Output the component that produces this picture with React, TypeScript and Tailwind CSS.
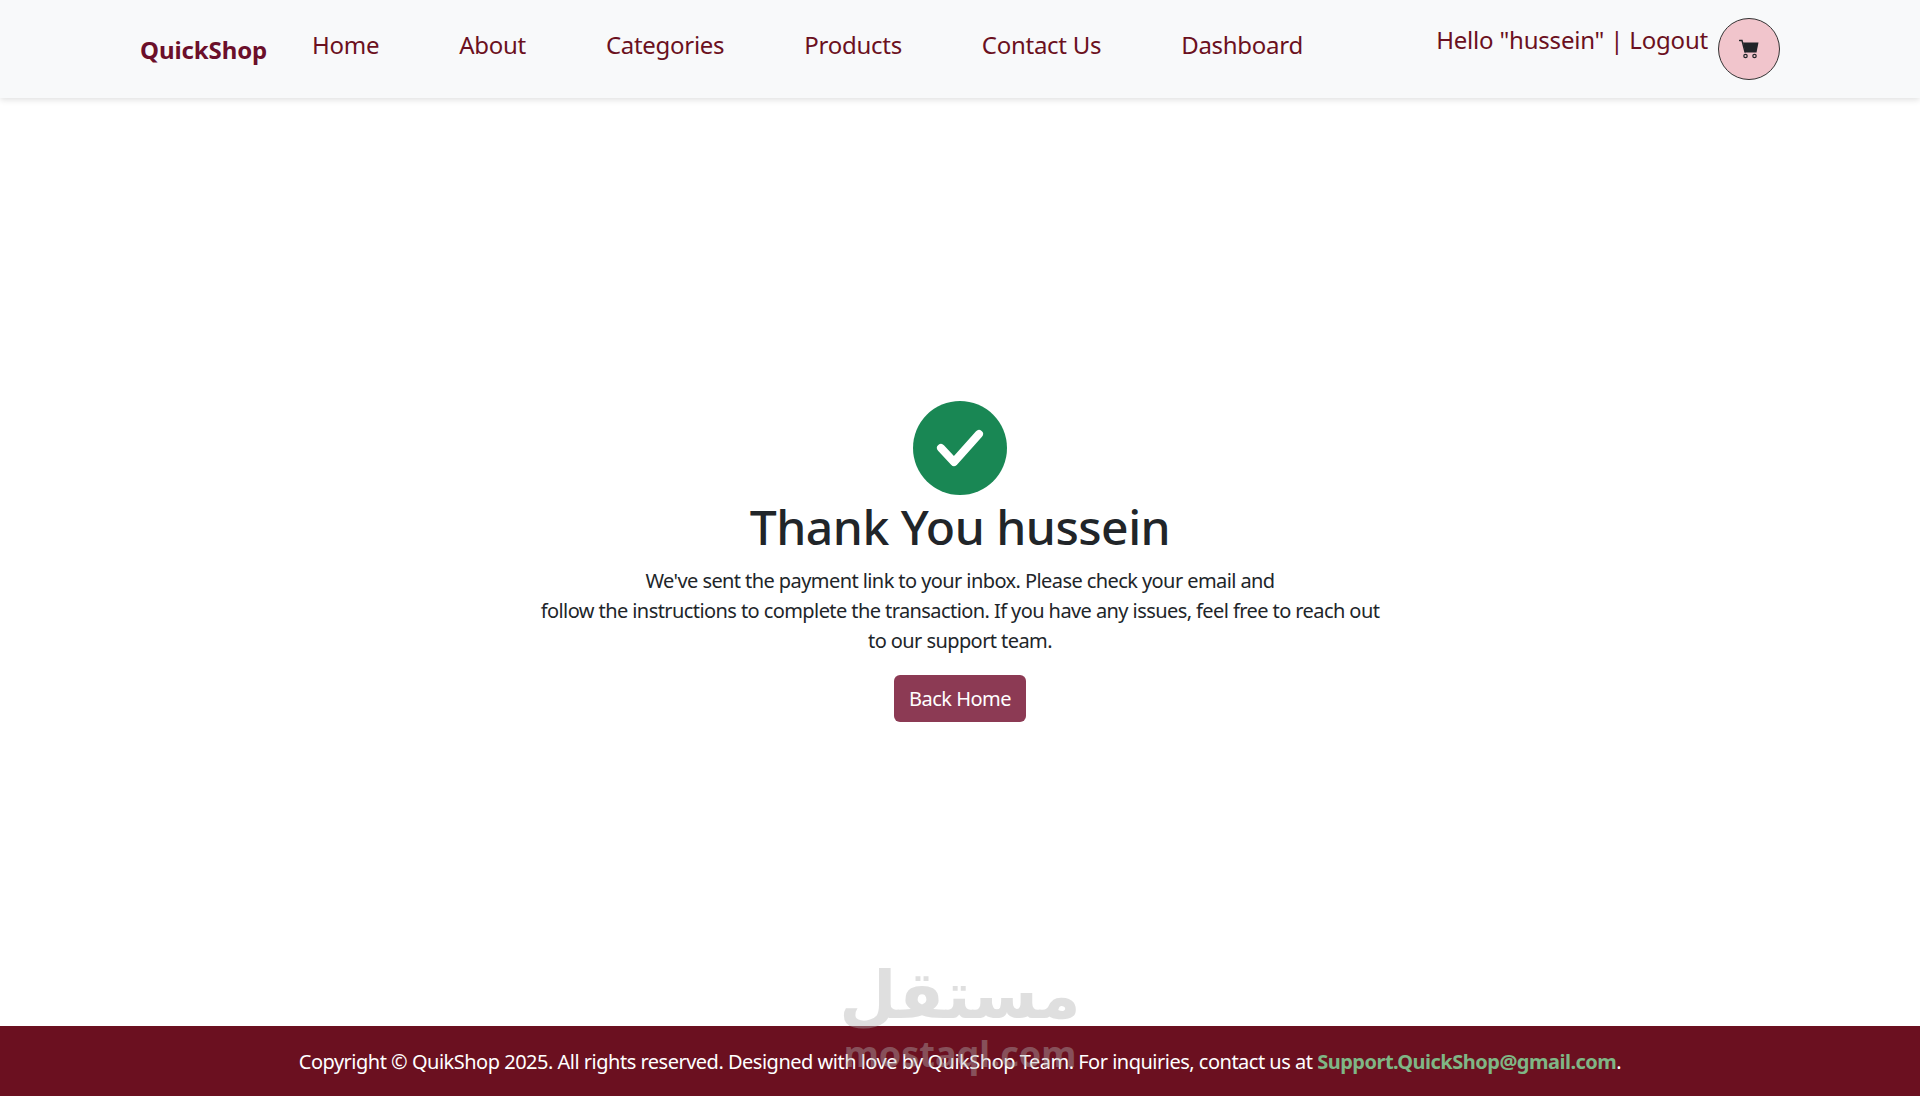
const links = ['Home', 'About', 'Categories', 'Products', 'Contact Us', 'Dashboard'];

function CartIcon() {
  return (
    <svg width="20" height="20" viewBox="0 0 20 20" fill="none">
      <path d="M0.5 1.5H3L6 13" stroke="#212529" strokeWidth="1.4" strokeLinecap="round" />
      <path d="M4 3.5H19.5L17.5 13.5H6.2Z" fill="#212529" />
      <circle cx="6.5" cy="17" r="1.7" stroke="#212529" strokeWidth="1.2" />
      <circle cx="15.5" cy="17" r="1.7" stroke="#212529" strokeWidth="1.2" />
    </svg>
  );
}

export default function App() {
  return (
    <div className="relative flex min-h-[1096px] flex-col bg-white font-['Noto_Sans',sans-serif]">
      {/* Navbar */}
      <nav className="flex h-[98px] items-center bg-[#f8f9fa] pl-[140px] pr-[140px] shadow-[0_2px_6px_rgba(0,0,0,0.12)]">
        <a className="mt-[2px] w-[172px] text-[24px] font-bold tracking-[-0.1px] text-[#6b0f2a]">QuickShop</a>
        <ul className="flex -translate-y-[4px] gap-[80px] text-[24px] tracking-[-0.28px] text-[#6b1020]">
          {links.map((link) => (
            <li key={link}>{link}</li>
          ))}
        </ul>
        <div className="ml-auto flex items-center gap-[10px]">
          <span className="-translate-y-[9px] text-[24px] tracking-[-0.2px] text-[#6b1020]">Hello "hussein" | Logout</span>
          <button className="flex h-[62px] w-[62px] items-center justify-center rounded-full border border-[#333] bg-[#f1c5cc]">
            <CartIcon />
          </button>
        </div>
      </nav>

      {/* Thank you */}
      <main className="flex flex-1 flex-col items-center pt-[303px]">
        <div className="flex h-[94px] w-[94px] items-center justify-center rounded-full bg-[#198754]">
          <svg width="94" height="94" viewBox="0 0 94 94" fill="none">
            <path d="M28 47L41 61L66 33" stroke="white" strokeWidth="8" strokeLinecap="round" strokeLinejoin="round" />
          </svg>
        </div>
        <h1 className="mt-[1px] text-[48px] leading-[62px] font-medium tracking-[-0.5px] text-[#212529]">Thank You hussein</h1>
        <p className="mt-[8px] w-[850px] text-center text-[20px] leading-[30px] tracking-[-0.58px] text-[#212529]">
          We've sent the payment link to your inbox. Please check your email and
          <br />
          follow the instructions to complete the transaction. If you have any issues, feel free to reach out to our support team.
        </p>
        <button className="mt-[19px] h-[47px] w-[132px] rounded-[6px] bg-[#8c3a54] text-[20px] tracking-[-0.5px] text-white">Back Home</button>
      </main>

      {/* Footer */}
      <footer className="flex h-[70px] items-center justify-center bg-[#6b1020] pt-[2px] text-[20px] tracking-[-0.5px] text-white">
        <p>
          Copyright © QuikShop 2025. All rights reserved. Designed with love by QuikShop Team. For inquiries, contact us at{' '}
          <a className="font-bold text-[#7fb685]">Support.QuickShop@gmail.com</a>.
        </p>
      </footer>

      {/* Watermark */}
      <div className="pointer-events-none absolute top-[958px] left-[840px] flex w-[240px] flex-col items-center text-[#b1b1b1] opacity-40">
        <span className="font-['DejaVu_Sans',sans-serif] text-[66px] leading-[76px] font-bold">مستقل</span>
        <span className="text-[36px] leading-[40px] font-bold">mostaql.com</span>
      </div>
    </div>
  );
}
